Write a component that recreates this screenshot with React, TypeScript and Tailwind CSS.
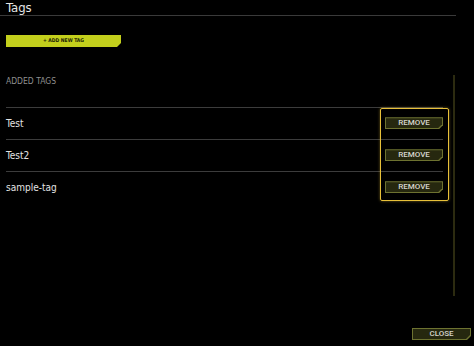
import React from 'react';

const tags = ['Test', 'Test2', 'sample-tag'];

const cut = '[clip-path:polygon(0_0,100%_0,100%_calc(100%_-_4px),calc(100%_-_4px)_100%,0_100%)]';

const OutlineButton = ({ label, className }: { label: string; className: string }) => (
  <div className={`bg-[#6d7230] p-px ${cut} ${className}`}>
    <div className={`h-full w-full bg-[#26280f] ${cut} flex items-center justify-center text-[8px] font-medium text-[#d6d6cc] font-['Roboto',sans-serif]`}>
      {label}
    </div>
  </div>
);

const App = () => {
  return (
    <div
      className="relative w-[474px] h-[346px] bg-black overflow-hidden flex flex-col"
      style={{ fontFamily: '"DejaVu Sans Condensed", "Roboto", sans-serif' }}
    >
      <div className="pl-[6px] pt-[1px] w-[456px] border-b border-[#3a3a3a] h-[16px] flex items-end pb-[1px]">
        <h1 className="text-[13px] leading-none text-[#e6e6e6]">Tags</h1>
      </div>

      <div className="flex pl-[6px] pt-[19px]">
        <button className={`w-[115px] h-[12px] bg-[#c3cf1c] ${cut} flex items-center justify-center text-[5px] font-bold text-[#1c1e05]`}>
          + ADD NEW TAG
        </button>
      </div>

      <div className="flex">
        <div className="flex-1">
          <div className="pl-[6px] pt-[28px] text-[8.5px] text-[#8f8f8f]">ADDED TAGS</div>

          <div className="relative ml-[6px] mt-[19px] w-[437px]">
            {tags.map((t) => (
              <div key={t} className="h-[32px] flex items-center justify-between border-t border-[#3c3c3c]">
                <span className="text-[10px] text-[#e4e4e4]">{t}</span>
                <OutlineButton label="REMOVE" className="w-[58px] h-[12px]" />
              </div>
            ))}
            <div className="absolute left-[374px] top-[1px] w-[69px] h-[93px] border-[1.5px] border-[#e8c13a] rounded-[2px] shadow-[0_0_3px_rgba(232,193,58,0.5)]" />
          </div>
        </div>
        <div className="w-[2px] h-[221px] mt-[28px] mr-[19px] bg-[#2c2b10]" />
      </div>

      <div className="flex-1" />
      <div className="flex justify-end pr-[3px] pb-[6px]">
        <OutlineButton label="CLOSE" className="w-[59px] h-[12px]" />
      </div>
    </div>
  );
};

export default App;
